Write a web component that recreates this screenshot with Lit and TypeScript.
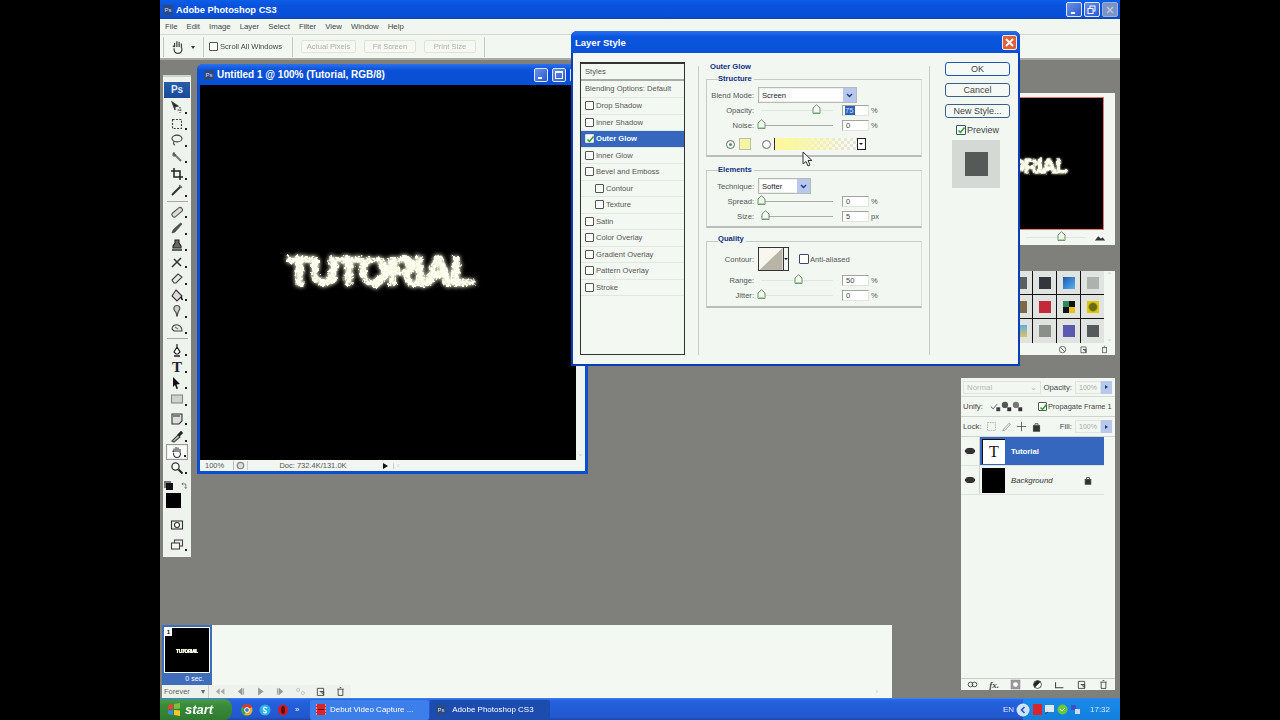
import { LitElement, html, css, svg } from "lit";
import { customElement } from "lit/decorators.js";

const ic = (body: unknown, w = 14, h = 14) => html`<svg class="ic" width=${w} height=${h} viewBox="0 0 14 14" fill="none" stroke="#3c3f3c" stroke-width="1.1">${body}</svg>`;

const tools: { i: unknown; sel?: boolean; gap?: number; sep?: boolean }[] = [
  { i: svg`<path d="M2 2l6 4-3 1 0 3z" fill="#222"/><path d="M10 7v6M7.5 10h5" stroke-dasharray="1.5 1"/>` },
  { i: svg`<rect x="2.5" y="2.5" width="9" height="9" stroke-dasharray="2 1.4"/>` },
  { i: svg`<ellipse cx="7" cy="5.5" rx="5" ry="3.4"/><path d="M4 8.5c-1 2 0 3.5 1 3.5"/>` },
  { i: svg`<path d="M3 3l8 8" stroke-width="2" stroke="#777"/><path d="M2 5h4M4 2v5" stroke-width=".8"/>` },
  { i: svg`<path d="M4 1v9h9M1 4h9v9" stroke-width="1.5" stroke="#222"/>` },
  { i: svg`<path d="M2 12L11 3" stroke-width="2" stroke="#333"/><path d="M9 2l3 3" stroke="#777"/>`, sep: true },
  { i: svg`<rect x="1" y="5" width="12" height="4.6" rx="2" transform="rotate(-40 7 7)" fill="#ddd" stroke="#555"/>` },
  { i: svg`<path d="M2 12l3-1 7-8-1.5-1L3 9z" fill="#555" stroke="#333" stroke-width=".6"/>` },
  { i: svg`<path d="M5 2h4v3l2 3v2H3V8l2-3z" fill="#666" stroke="#222"/><path d="M2 12h10" stroke-width="1.6"/>` },
  { i: svg`<path d="M2 12L11 3M4 4l7 7" stroke="#333" stroke-width="1.5"/>` },
  { i: svg`<path d="M2 9l6-6 4 3-6 6H4z" fill="#e8ece8" stroke="#444"/>` },
  { i: svg`<path d="M6 2l6 6-5 5-5-5z" fill="#ddd" stroke="#333"/><path d="M11 9l1.5 3" stroke="#111" stroke-width="1.6"/>` },
  { i: svg`<path d="M7 1.5c3 0 3.5 3 2 5l-1 2-1 4-1-4-1.500-2c-1.500-2-.5-5 2.500-5z" fill="#ccc" stroke="#444"/>` },
  { i: svg`<path d="M2 8c0-3 3-5 6-4s4 4 4 6H4z" fill="#e8ece8" stroke="#444"/><path d="M5 6l3 2" stroke="#777"/>`, sep: true },
  { i: svg`<path d="M7 1v3M4 9l3-5 3 5-2 2H6z" fill="#fff" stroke="#222" stroke-width="1.2"/><path d="M4 13h6" stroke-width="1.5" stroke="#222"/>` },
  { i: svg`<text x="7" y="12.500" text-anchor="middle" font-family="Liberation Serif, serif" font-size="15" font-weight="700" fill="#222" stroke="none">T</text>` },
  { i: svg`<path d="M3 1l7 7-3.500.5 1.500 4-1.500.5-1.500-4L3 11z" fill="#111" stroke="none"/>` },
  { i: svg`<rect x="1.500" y="3" width="11" height="8" fill="#cfd3cf" stroke="#888"/>`, },
  { i: svg`<path d="M2 2h10v7l-3 3H2z" fill="#ddd" stroke="#333"/><path d="M3 4h7" stroke="#333"/>`, gap: 3 },
  { i: svg`<path d="M2 12l6-6 2 2-6 5z" fill="#ccc" stroke="#444"/><path d="M8 6l3-3 1 1-3 3" fill="#222" stroke="#222" stroke-width="1.6"/>` },
  { i: svg`<path d="M4 7V3.500M6 7V2M8 7V2.500M10 8V4M4 7L2.500 6M3.500 8c0 3 1.500 4.500 3.500 4.500s3.500-1.500 3.500-4.500" stroke="#333"/>`, sel: true },
  { i: svg`<circle cx="5.500" cy="5.500" r="3.600" fill="#fff" stroke="#333" stroke-width="1.300"/><path d="M8.500 8.500l4 4" stroke="#222" stroke-width="2"/>` },
];

const checks: [string, boolean, boolean, boolean][] = [
  ["Drop Shadow", false, false, false], ["Inner Shadow", false, false, false], ["Outer Glow", true, false, true],
  ["Inner Glow", false, false, false], ["Bevel and Emboss", false, false, false], ["Contour", false, true, false],
  ["Texture", false, true, false], ["Satin", false, false, false], ["Color Overlay", false, false, false],
  ["Gradient Overlay", false, false, false], ["Pattern Overlay", false, false, false], ["Stroke", false, false, false],
];

const thumb = (x: number) => html`<svg class="thumb" style="left:${x}px" width="9" height="10" viewBox="0 0 9 10"><path d="M1 9.500V4L4.500 .7 8 4v5.500z" fill="#f4f8f0" stroke="#6d8f6d"/><path d="M1.500 8.700h6" stroke="#8fd08f"/></svg>`;

const sliderRow = (label: string, x: number, val: string, unit: string, track = true, sel = false) => html`
  <div class="row">
    <span class="lbl">${label}</span>
    <span class="track ${track ? "" : "faint"}">${thumb(x)}</span>
    <span class="val ${sel ? "hl" : ""}">${sel ? html`<b>${val}</b>` : val}</span>
    <span class="unit">${unit}</span>
  </div>`;

const tutorial = (w: number, h: number, fs: number, fid: string, sp: number) => svg`
  <svg class="tut" width=${w} height=${h} viewBox="0 0 ${w} ${h}">
    <defs>
      <filter id=${fid} x="-15%" y="-50%" width="130%" height="200%">
        <feTurbulence type="fractalNoise" baseFrequency="0.2" numOctaves="2" seed="7" result="n"/>
        <feDisplacementMap in="SourceGraphic" in2="n" scale=${fs * 0.2} xChannelSelector="R" yChannelSelector="G" result="d"/>
        <feTurbulence type="fractalNoise" baseFrequency="0.42" numOctaves="1" seed="3" result="sp"/>
        <feColorMatrix in="sp" type="matrix" values="0 0 0 0 0 0 0 0 0 0 0 0 0 0 0 0 0 0 -14 8.800" result="holes"/>
        <feComposite in="d" in2="holes" operator="in" result="spk"/>
        <feGaussianBlur in="d" stdDeviation=${fs * 0.05} result="b"/>
        <feColorMatrix in="b" type="matrix" values="0 0 0 0 .95 0 0 0 0 .95 0 0 0 0 .72 0 0 0 1.100 0" result="glow"/>
        <feMerge><feMergeNode in="glow"/><feMergeNode in="spk"/></feMerge>
      </filter>
    </defs>
    <text x=${w / 2} y=${h * 0.72} text-anchor="middle" font-family="Liberation Sans, sans-serif" font-weight="700" font-size=${fs} letter-spacing=${sp} fill="#fdfdf0" stroke="#fdfdf0" stroke-width=${fs * 0.05} filter="url(#${fid})">TUTORIAL</text>
  </svg>`;

const swatchColors = ["#5a5f60", "#33363a", "linear-gradient(135deg,#1a5ab0,#5ab0f0)", "#aeb2ae", "#7a6a48", "#c22a3a", "conic-gradient(#111 25%,#e8c020 0 50%,#111 0 75%,#2a8a60 0)", "radial-gradient(#6a6a10 40%,#e0c800 60%)", "linear-gradient(#5ab0e8,#e0c060)", "#8a8f8a", "#5a58b0", "#555a5a"];

@customElement("app-root")
export class AppRoot extends LitElement {
  static styles = css`
    :host { display: flex; justify-content: center; width: 1280px; height: 720px; background: #000; font-family: "Liberation Sans", Arial, sans-serif; overflow: hidden; }
    * { box-sizing: border-box; }
    .screen { width: 960px; height: 720px; display: flex; flex-direction: column; filter: blur(.6px); color: #333; font-size: 8px; white-space: nowrap; }
    .ic { display: block; flex: none; }

    /* title */
    .xp-title { background: linear-gradient(#0a5ee8, #0a52dc 30%, #0850d8 80%, #0a46b8); color: #fff; display: flex; align-items: center; }
    .main-title { height: 19px; padding: 0 2px 0 3px; gap: 3px; font-size: 9.300px; font-weight: 700; }
    .ps-mini { width: 10px; height: 10px; background: #2a4a80; color: #cfe0ff; font-size: 6px; text-align: center; line-height: 10px; flex: none; font-weight: 400; }
    .grow { flex: 1; }
    .wbtn { width: 16px; height: 15px; border: 1px solid #dfe8ff; border-radius: 2px; background: linear-gradient(135deg, #6a90e8, #2a5ad0); margin-left: -1px; position: relative; display: flex; align-items: center; justify-content: center; }
    .wbtn.off { background: #7a94c8; border-color: #9ab0d8; color: #aab6d0; }
    .wbtn svg { display: block; }
    .wbtn.small { width: 14px; height: 14px; margin-left: 1px; }

    .menu { height: 15px; background: #f2f6f1; display: flex; align-items: center; padding-left: 5px; gap: 9px; font-size: 7.800px; color: #444; }
    .opts { height: 26px; background: #f3f7f2; border-top: 1px solid #d4d8d2; border-bottom: 2px solid #a8aca6; display: flex; align-items: center; padding-left: 3px; font-size: 7.600px; color: #444; }
    .grip { width: 1px; height: 20px; background: #bfc4be; margin-right: 6px; }
    .v { width: 1px; height: 20px; background: #c5c9c4; }
    .caret { width: 0; height: 0; border: 2.500px solid transparent; border-top: 3px solid #333; margin: 3px 8px 0 5px; }
    .cb { width: 9px; height: 9px; border: 1px solid #555; background: #fbfdfa; border-radius: 1px; flex: none; display: inline-block; position: relative; }
    .sp5 { width: 5px; flex: none; }
    .scrollall { margin: 0 8px 0 2px; width: 64px; }
    .ob { height: 13px; border: 1px solid #e2e4d0; border-radius: 2px; color: #adb1a8; display: flex; align-items: center; justify-content: center; background: #f5f8f3; margin-left: 8px; }
    .ob.a { width: 55px; } .ob.b, .ob.c { width: 52px; }
    .v2 { margin-left: 8px; }

    .work { flex: 1; background: #7f807c; position: relative; z-index: 1; }
    .win { position: absolute; }

    /* toolbox */
    .toolbox { left: 3px; top: 15px; width: 28px; height: 482px; background: #eef3ee; display: flex; flex-direction: column; align-items: center; padding-top: 5px; border-top: 2px solid #cfd3ce; }
    .ps { width: 26px; height: 16px; background: linear-gradient(#2a5ca8, #174a98); color: #dfeaff; font: 700 10px/15px "Liberation Sans", sans-serif; text-align: center; margin-bottom: 1px; }
    .tool { width: 22px; height: 16.600px; display: flex; align-items: center; justify-content: center; position: relative; flex: none; }
    .tool::after { content: ""; position: absolute; right: 1px; bottom: 2px; width: 2px; height: 2px; background: #222; }
    .tool.sel { border: 1px solid #999; background: #fff; }
    .tool.nomark::after { display: none; }
    .sep { width: 21px; height: 1px; background: #aaa; margin: 2px 0 2px; flex: none; }
    .mini-cols { display: flex; align-items: center; gap: 7px; height: 12px; margin-top: 4px; }
    .mini-fg { width: 7px; height: 7px; background: #111; box-shadow: -2px -2px 0 0 #777; }
    .fg { width: 15px; height: 15px; background: #000; margin-top: 1px; flex: none; align-self: flex-start; margin-left: 3px; }
    .lowtool { margin-top: 8px; }
    .lowtool.second { margin-top: 3px; }

    /* document window */
    .doc { left: 37px; top: 4px; width: 391px; height: 410px; background: #0a4ed2; border-radius: 6px 6px 0 0; display: flex; flex-direction: column; padding: 0 3px 3px; }
    .doc-title { height: 21px; margin: 0 -3px; padding: 0 4px 0 7px; gap: 3px; background: linear-gradient(#2a72ee, #0a50d8 30%, #0850d4); border-radius: 6px 6px 0 0; font-size: 10px; font-weight: 700; }
    .doc-body { flex: 1; display: flex; min-height: 0; }
    .canvas { width: 376px; background: #000; display: flex; align-items: center; justify-content: center; }
    .tut { display: block; flex: none; }
    .canvas .tut { margin: 0 16px 6px 0; }
    .vscroll { flex: 1; background: #f0f4ef; display: flex; align-items: flex-end; justify-content: center; color: #c8ccc8; font-size: 8px; padding-bottom: 2px; }
    .doc-status { height: 11px; background: #f2f6f1; display: flex; align-items: center; font-size: 7.500px; color: #555; }
    .doc-status .a { width: 34px; padding-left: 5px; border-right: 1px solid #bbb; }
    .doc-status .b { width: 14px; border-right: 1px solid #ccc; display: flex; justify-content: center; }
    .doc-status .c { width: 130px; text-align: center; }
    .tri { width: 0; height: 0; border: 3px solid transparent; border-left: 5px solid #111; border-right: 0; }
    .doc-status .d { width: 16px; display: flex; justify-content: center; border-right: 1px solid #ccc; }
    .doc-status .e { color: #c8ccc8; margin-left: 3px; }

    /* layer style dialog */
    .dlg { left: 411px; top: -29px; width: 449px; height: 335px; background: #0a3eb8; border-radius: 6px 6px 0 0; padding: 0 2px 2px; display: flex; flex-direction: column; z-index: 3; }
    .dlg-title { height: 22px; margin: 0 -2px; padding: 0 3px 0 4px; border-radius: 6px 6px 0 0; font-size: 9.500px; font-weight: 700; background: linear-gradient(#2a72ee, #0a56de 25%, #0850d8); }
    .close { width: 15px; height: 15px; border: 1px solid #f4e8e0; border-radius: 2px; background: #e0603a; display: flex; align-items: center; justify-content: center; }
    .dlg-body { flex: 1; background: #f2f7f2; display: flex; padding: 9px 0 9px 7px; min-height: 0; font-size: 7.600px; }
    .list { width: 105px; border: 1px solid #333; border-top-width: 2px; background: #f4f8f3; color: #555; flex: none; }
    .list > div { display: flex; align-items: center; height: 16.500px; border-bottom: 1px solid #e3e7e2; padding-left: 4px; gap: 2px; }
    .list .head { height: 16.500px; border-bottom: 2px solid #aaa; }
    .list .blend { height: 17.500px; }
    .list .ind { padding-left: 14px; }
    .list .on { background: #3567bf; color: #fff; font-weight: 700; }
    .on .cb { border-color: #ddd; }
    .cb svg { position: absolute; left: 0; top: 0; }
    .gap13 { width: 13px; flex: none; }
    .vline { width: 1px; background: #c7ccc7; margin-top: 4px; flex: none; }
    .mid { width: 216px; margin: 0 7px; flex: none; }
    .h { font-weight: 700; color: #12307f; height: 11px; line-height: 11px; }
    .h.top { padding-left: 4px; height: 17px; line-height: 10px; }
    .grp { border: 1px solid #c6cbc6; border-right-color: #dadfda; border-bottom: 2px solid #b9beb9; margin-bottom: 13px; padding: 0 0 2px; }
    .grp.g1 { padding-bottom: 0; }
    .grp.g3 { padding-bottom: 3px; }
    .grp .h { margin: -7px 0 0 11px; background: #f2f7f2; width: max-content; padding-right: 2px; }
    .grp.g3 .h { margin: -9px 0 3px 11px; }
    .row { height: 15px; display: flex; align-items: center; color: #555; }
    .row.sr { height: 16px; margin-top: 3px; }
    .lbl { width: 47px; text-align: right; margin-right: 4px; flex: none; color: #555; }
    .sel { height: 16px; background: #fff; border: 1px solid #b5bab5; display: flex; align-items: center; padding-left: 3px; justify-content: space-between; color: #222; box-shadow: inset 0 0 0 1px #eee; }
    .sel i { width: 13px; height: 14px; background: #b8c8ec; display: flex; align-items: center; justify-content: center; }
    .s1 { width: 99px; }
    .s2 { width: 53px; }
    .track { position: relative; width: 72px; height: 1px; background: #a9ada9; margin: 0 9px 0 3px; flex: none; }
    .track.faint { background: #e2e6e2; }
    .thumb { position: absolute; top: -6px; margin-left: -4px; }
    .val { width: 27px; height: 11px; background: #fff; border: 1px solid #e0e4e0; border-left-color: #a0a5a0; border-top-color: #a0a5a0; padding-left: 3px; line-height: 9px; font-size: 7.500px; color: #444; flex: none; }
    .val b { background: #2f60b8; color: #cfe0ff; font-weight: 400; display: inline-block; width: 10px; height: 9px; margin-left: -1px; }
    .unit { margin-left: 2px; font-size: 7.500px; color: #555; }
    .colrow { height: 16px; margin: 3px 0 3px; display: flex; align-items: center; padding-left: 19px; }
    .radio { width: 9px; height: 9px; border-radius: 50%; border: 1px solid #667; background: #fbfdfa; flex: none; display: flex; align-items: center; justify-content: center; }
    .radio u { width: 3px; height: 3px; border-radius: 50%; background: #3a9a3a; }
    .sw { width: 12px; height: 12px; background: #f6f4a6; border: 1px solid #bdbda0; margin: 0 10.500px 0 4px; flex: none; }
    .grad { width: 83px; height: 12px; margin-left: 3px; border-left: 1px solid #333; background: linear-gradient(90deg, #fbf8a0 12%, #f8f6a8 30%, rgba(248,246,180,0) 95%), repeating-conic-gradient(#e4e6de 0 25%, #fbfbf6 0 50%) 0 0 / 6px 6px; flex: none; }
    .gdrop { width: 9px; height: 12px; border: 1px solid #222; background: #fff; display: flex; align-items: center; justify-content: center; }
    .gdrop::after, .cdrop::after { content: ""; border: 2px solid transparent; border-top: 2.500px solid #111; margin-top: 2px; }
    .row.contour-row { height: 24px; margin: 1px 0 2px; }
    .contour { width: 25px; height: 24px; border: 1px solid #333; border-right: 0; flex: none; background: #f7f7f0; display: block; }
    .cdrop { width: 6px; height: 24px; border: 1px solid #333; display: flex; align-items: center; justify-content: center; flex: none; }
    .row .cb { margin: 0 1px 0 10px; width: 10px; height: 10px; border-color: #446; }
    .right { width: 65px; margin-left: 15px; display: flex; flex-direction: column; align-items: stretch; font-size: 9px; color: #444; flex: none; }
    .btn { height: 14px; border: 1px solid #3a5f88; border-right-width: 1.500px; border-bottom-width: 1.500px; border-radius: 3px; background: #f6faf6; display: flex; align-items: center; justify-content: center; margin-bottom: 7px; }
    .btn.def { border: 1.500px solid #1f56b0; }
    .pv { display: flex; align-items: center; justify-content: center; gap: 1px; margin: 0 0 3px; height: 10px; }
    .pv .cb { border-color: #356; width: 10px; height: 10px; }
    .pbox { width: 48px; height: 48px; background: #d5d9d5; display: flex; align-items: center; justify-content: center; margin-left: 7px; margin-top: 2px; }
    .pbox div { width: 23px; height: 24px; background: #555958; }
    .cursor { position: absolute; left: 231px; top: 120px; }

    /* navigator */
    .nav { left: 860px; top: 33px; width: 95px; height: 152px; background: #f3f7f2; padding-top: 4px; }
    .nav-img { width: 84px; height: 133px; background: #000; border: 1px solid #e87070; border-left: 0; overflow: hidden; display: flex; align-items: center; }
    .nav-img .tut { margin-left: -60px; }
    .nav-foot { display: flex; align-items: center; height: 15px; position: relative; }
    .nav-foot .track { width: 60px; margin: 0 8px 0 6px; }

    /* swatches */
    .swp { left: 860px; top: 211px; width: 95px; height: 84px; background: #f3f7f2; display: flex; flex-wrap: wrap; }
    .swg { display: grid; grid-template-columns: 13px 24px 24px 23px; grid-auto-rows: 24px; width: 84px; }
    .swc { display: flex; align-items: center; justify-content: center; background: #e0e3df; border-right: 1px solid #111; border-bottom: 1px solid #111; }
    .swc:nth-child(4n) { border-right: 0; }
    .swc:nth-child(n+9) { border-bottom: 0; }
    .swc div { width: 12px; height: 12px; }
    .swc:nth-child(4n+1) div { margin-left: -8px; width: 10px; }
    .swsb { width: 11px; height: 72px; display: flex; flex-direction: column; justify-content: space-between; color: #ccc; font-size: 8px; text-align: center; }
    .swfoot { width: 95px; height: 12px; display: flex; justify-content: flex-end; gap: 12px; align-items: center; padding-right: 6px; }

    /* layers */
    .layers { left: 801px; top: 318px; width: 154px; height: 312px; background: #f3f7f2; display: flex; flex-direction: column; font-size: 7.800px; color: #444; }
    .lr { height: 20px; display: flex; align-items: center; padding: 0 3px 0 2px; border-bottom: 1px solid #d0d4cf; flex: none; }
    .lr.r1 { height: 19px; border-bottom: 1px solid #d5d9d4; }
    .nrm { width: 78px; height: 13px; border: 1px solid #dfe3de; color: #b5b9b5; display: flex; justify-content: space-between; align-items: center; padding: 0 3px; }
    .op { flex: 1; text-align: right; padding-right: 3px; }
    .op2 { width: 26px; height: 13px; border: 1px solid #e0e4df; color: #aaa; line-height: 11px; text-align: center; font-size: 7px; }
    .arr { width: 11px; height: 13px; background: #b8c8ec; display: flex; align-items: center; justify-content: center; }
    .arr::after { content: ""; border: 2.500px solid transparent; border-left: 3px solid #1d3a88; border-right: 0; }
    .s4 { width: 4px; flex: none; } .s7 { width: 7px; flex: none; } .s15 { width: 15px; flex: none; } .s11 { width: 11px; flex: none; }
    .prop { margin-left: 1px; font-size: 7.400px; }
    .lay-row { height: 29px; display: flex; align-items: center; width: 143px; border-bottom: 1px solid #dfe3de; flex: none; }
    .eye { width: 19px; height: 100%; border-right: 1px solid #ccd0cb; background: #f3f7f2; display: flex; align-items: center; justify-content: center; flex: none; }
    .lthumb { width: 23px; height: 25px; margin: 0 6px 0 2px; display: flex; align-items: center; justify-content: center; flex: none; }
    .lay-row.on { background: #3567bf; color: #fff; font-weight: 700; }
    .lay-row.on .lthumb { background: #fff; font: 400 16px/25px "Liberation Serif", serif; color: #111; border-left: 1px solid #111; border-top: 1px solid #111; }
    .lay-row.bg .lthumb { background: #000; }
    .lay-row.bg i { flex: 1; color: #333; }
    .lays { flex: 1; display: flex; min-height: 0; position: relative; }
    .lays-l { width: 143px; }
    .lfoot { height: 12px; border-top: 1px solid #c8ccc7; display: flex; align-items: center; gap: 11px; padding: 0 6px 0 10px; flex: none; justify-content: flex-end; }
    .fx { font: italic 700 9px "Liberation Serif", serif; }

    /* animation */
    .anim { left: 2px; top: 565px; width: 730px; height: 73px; background: #f4f8f3; display: grid; grid-template-columns: 50px 1fr; grid-template-rows: 60px 13px; }
    .frame { background: #3d6dbb; padding: 2px 2px 0; position: relative; color: #fff; font-size: 7px; }
    .fimg { width: 46px; height: 46px; background: #000; border: 1px solid #fff; position: relative; display: flex; align-items: center; justify-content: center; overflow: hidden; }
    .fimg em { position: absolute; left: 0; top: 0; width: 7px; height: 8px; background: #fff; color: #000; font: 700 6px/8px "Liberation Sans", sans-serif; text-align: center; }
    .ftime { text-align: right; padding-right: 6px; line-height: 10px; margin-top: 1px; }
    .actl { grid-column: 1 / 3; display: flex; align-items: center; font-size: 7.500px; color: #666; }
    .forever { width: 47px; padding-left: 2px; display: flex; justify-content: space-between; border-right: 1px solid #ccc; height: 100%; align-items: center; padding-right: 3px; background: #eef2ed; }
    .pbtns { display: flex; gap: 9px; align-items: center; padding-left: 6px; background: #eef2ed; height: 100%; width: 142px; }
    .ascroll { margin-left: auto; margin-right: 14px; color: #c8ccc8; }

    /* taskbar */
    .task { height: 22px; background: linear-gradient(#2a6ae8, #2460dc 15%, #2258d0 85%, #1c48b0); display: flex; align-items: center; color: #fff; font-size: 8px; border-top: 1px solid #3c80f0; }
    .start { width: 72px; height: 21px; background: linear-gradient(#4a9a4a, #3a8c3a 30%, #2f7a30); border-radius: 0 8px 8px 0; display: flex; align-items: center; padding-left: 7px; gap: 4px; font: italic 700 13px "Liberation Sans", sans-serif; flex: none; }
    .ql { display: flex; gap: 6px; align-items: center; padding-left: 9px; width: 78px; flex: none; }
    .tb { height: 20px; display: flex; align-items: center; padding-left: 6px; gap: 4px; border-radius: 2px; flex: none; }
    .tb.l { width: 119px; background: #3c7eea; }
    .tb.d { width: 120px; background: #1c4cae; margin-left: 1px; }
    .tray { height: 21px; background: linear-gradient(#1a8aea, #1280dc); width: 97px; display: flex; align-items: center; flex: none; }
    .tray svg { margin-right: 2px; flex: none; }
    .tray .circ { margin: 0 3px 0 -7px; }
    .clock { margin-left: 7px; color: #d8e8ff; }
    .en { margin-left: auto; margin-right: 9px; color: #dfe8ff; }
  `;

  private cb(on = false) {
    return html`<span class="cb">${on ? html`<svg width="9" height="9" viewBox="0 0 9 9" fill="none" stroke="#2f9a2f" stroke-width="1.500"><path d="M1.500 4.500l2 2 4-5"/></svg>` : ""}</span>`;
  }

  private wb(kind: string, cls = "") {
    const g = kind === "min" ? svg`<rect x="2" y="7" width="4" height="2" fill="#fff"/>`
      : kind === "max" ? svg`<rect x="1.500" y="1.500" width="7" height="7" fill="none" stroke="#fff"/><path d="M1.500 2.500h7" stroke="#fff"/>`
      : kind === "rest" ? svg`<rect x="3" y="1" width="5" height="5" fill="none" stroke="#fff"/><rect x="1" y="3.500" width="5" height="5" fill="#3a6ad8" stroke="#fff"/>`
      : svg`<path d="M2 2l6 6M8 2l-6 6" stroke="#bcc6da" stroke-width="1.500"/>`;
    return html`<span class="wbtn ${cls}"><svg width="10" height="10" viewBox="0 0 10 10">${g}</svg></span>`;
  }

  private group(title: string, body: unknown, cls = "") {
    return html`<div class="grp ${cls}"><div class="h">${title}</div>${body}</div>`;
  }

  private drop() {
    return html`<i><svg width="7" height="5" viewBox="0 0 7 5" fill="none" stroke="#1d3a88" stroke-width="1.400"><path d="M1 1l2.500 2.500L6 1"/></svg></i>`;
  }

  render() {
    return html`<div class="screen">
      <div class="xp-title main-title">
        <span class="ps-mini">Ps</span><span>Adobe Photoshop CS3</span><span class="grow"></span>
        ${this.wb("min")}${this.wb("rest")}${this.wb("x", "off")}
      </div>
      <div class="menu">${["File", "Edit", "Image", "Layer", "Select", "Filter", "View", "Window", "Help"].map((m) => html`<span>${m}</span>`)}</div>
      <div class="opts">
        <span class="grip"></span>
        ${ic(svg`<path d="M4 7V3.500M6 7V2M8 7V2.500M10 8V4M4 7L2.500 6M3.500 8c0 3 1.500 4.500 3.500 4.500s3.500-1.500 3.500-4.500" stroke="#444"/>`, 16, 16)}
        <span class="caret"></span><span class="v"></span>
        <span class="sp5"></span>${this.cb()}
        <span class="scrollall">Scroll All Windows</span><span class="v"></span>
        <span class="ob a">Actual Pixels</span>
        <span class="ob b">Fit Screen</span>
        <span class="ob c">Print Size</span>
        <span class="v v2"></span>
      </div>

      <div class="work">
        <div class="win toolbox">
          <div class="ps">Ps</div>
          ${tools.map((t) => html`<div class="tool ${t.sel ? "sel" : ""}" style=${t.gap ? `margin-top:${t.gap}px` : ""}>${ic(t.i)}</div>${t.sep ? html`<div class="sep"></div>` : ""}`)}
          <div class="mini-cols"><span class="mini-fg"></span>${ic(svg`<path d="M3 3h6l0 7M7 8l2 2 2-2M3 3l2-2M3 3l2 2" stroke-width=".9"/>`, 9, 9)}</div>
          <div class="fg"></div>
          <div class="tool nomark lowtool">${ic(svg`<rect x="1.500" y="3" width="11" height="8" fill="#eee" stroke="#333"/><circle cx="7" cy="7" r="2.500" fill="#fff" stroke="#333"/>`)}</div>
          <div class="tool lowtool second">${ic(svg`<rect x="4.500" y="3" width="8" height="6" fill="#eee" stroke="#444"/><rect x="1.500" y="6" width="8" height="6" fill="#f6f6f6" stroke="#444"/>`)}</div>
        </div>

        <div class="win doc">
          <div class="xp-title doc-title">
            <span class="ps-mini">Ps</span><span>Untitled 1 @ 100% (Tutorial, RGB/8)</span><span class="grow"></span>
            ${this.wb("min", "small")}${this.wb("max", "small")}${this.wb("x", "small")}
          </div>
          <div class="doc-body">
            <div class="canvas">${tutorial(220, 70, 40, "tg", -2)}</div>
            <div class="vscroll">⌄</div>
          </div>
          <div class="doc-status">
            <span class="a">100%</span>
            <span class="b">${ic(svg`<circle cx="7" cy="7" r="5" fill="#ddd" stroke="#888" stroke-width="2"/>`, 9, 9)}</span>
            <span class="c">Doc: 732.4K/131.0K</span>
            <span class="d"><span class="tri"></span></span>
            <span class="e">‹</span>
          </div>
        </div>

        <div class="win nav">
          <div class="nav-img">${tutorial(120, 40, 20, "tn", -1)}</div>
          <div class="nav-foot"><span class="track faint">${thumb(35)}</span>${ic(svg`<path d="M1 10l4-5 3 3 2-2 3 4z" fill="#333" stroke="none"/>`, 12, 12)}</div>
        </div>

        <div class="win swp">
          <div class="swg">${swatchColors.map((c) => html`<div class="swc"><div style="background:${c}"></div></div>`)}</div>
          <div class="swsb"><span>⌃</span><span>⌄</span></div>
          <div class="swfoot">
            ${ic(svg`<circle cx="7" cy="7" r="5"/><path d="M3.500 3.500l7 7"/>`, 9, 9)}
            ${ic(svg`<path d="M3 3h8v9H3z"/><path d="M6 7h5v5" fill="#888"/>`, 9, 9)}
            ${ic(svg`<path d="M3 4h8M4 4v8h6V4M6 2h2"/>`, 9, 9)}
          </div>
        </div>

        <div class="win layers">
          <div class="lr r1"><span class="nrm">Normal<span>⌄</span></span><span class="op">Opacity:</span><span class="op2">100%</span><span class="arr"></span></div>
          <div class="lr"><span>Unify:</span><span class="s7"></span>
            ${ic(svg`<path d="M1 7l3 3 5-6" stroke-width="1"/><rect x="8" y="8" width="5" height="5" fill="#444" stroke="none"/>`, 11, 11)}
            ${ic(svg`<circle cx="5" cy="5" r="4" fill="#555" stroke="none"/><rect x="8" y="8" width="5" height="5" fill="#333" stroke="none"/>`, 11, 11)}
            ${ic(svg`<circle cx="5" cy="5" r="4" fill="#777" stroke="none"/><rect x="8" y="8" width="5" height="5" fill="#333" stroke="none"/>`, 11, 11)}
            <span class="s15"></span>${this.cb(true)}<span class="prop">Propagate Frame 1</span>
          </div>
          <div class="lr"><span>Lock:</span><span class="s4"></span>
            ${ic(svg`<rect x="2" y="2" width="10" height="10" stroke="#aaa" stroke-dasharray="2 1"/>`, 11, 11)}<span class="s4"></span>
            ${ic(svg`<path d="M2 12l8-9 2 1-7 8z" stroke="#999"/>`, 11, 11)}<span class="s4"></span>
            ${ic(svg`<path d="M7 1v12M1 7h12" stroke="#555"/>`, 11, 11)}<span class="s4"></span>
            ${ic(svg`<rect x="3" y="6" width="8" height="7" fill="#333"/><path d="M5 6V3.500h4V6" />`, 11, 11)}
            <span class="op">Fill:</span><span class="op2">100%</span><span class="arr"></span>
          </div>
          <div class="lays">
            <div class="lays-l">
              <div class="lay-row on"><span class="eye">${ic(svg`<ellipse cx="7" cy="7" rx="5.500" ry="3" fill="#333" stroke="#222"/>`, 12, 12)}</span><span class="lthumb">T</span><span>Tutorial</span></div>
              <div class="lay-row bg"><span class="eye">${ic(svg`<ellipse cx="7" cy="7" rx="5.500" ry="3" fill="#333" stroke="#222"/>`, 12, 12)}</span><span class="lthumb"></span><i>Background</i>${ic(svg`<rect x="3" y="6" width="8" height="7" fill="#333"/><path d="M5 6V3.500h4V6"/>`, 10, 10)}<span class="s11"></span></div>
            </div>
          </div>
          <div class="lfoot">
            ${ic(svg`<circle cx="4.500" cy="7" r="3"/><circle cx="9.500" cy="7" r="3"/>`, 11, 11)}
            <span class="fx">fx.</span>
            ${ic(svg`<rect x="1.500" y="1.500" width="11" height="11" fill="#999" stroke="#888"/><circle cx="7" cy="7" r="3" fill="#fff" stroke="none"/>`, 11, 11)}
            ${ic(svg`<circle cx="7" cy="7" r="5" fill="#fff"/><path d="M3.500 10.500a5 5 0 0 1 7-7z" fill="#222"/>`, 11, 11)}
            ${ic(svg`<path d="M2 4v7h10" stroke-width="1.300"/>`, 11, 11)}
            ${ic(svg`<path d="M3 3h8v9H3z"/><path d="M6 7h5v5" fill="#888"/>`, 11, 11)}
            ${ic(svg`<path d="M3 4h8M4 4v8h6V4M6 2h2"/>`, 11, 11)}
          </div>
        </div>

        <div class="win anim">
          <div class="frame">
            <div class="fimg"><em>1</em>${tutorial(30, 12, 4.500, "tf", -0.1)}</div>
            <div class="ftime">0 sec.</div>
          </div>
          <div></div>
          <div class="actl">
            <span class="forever"><span>Forever</span><span>▾</span></span>
            <span class="pbtns">
              ${ic(svg`<path d="M6 3v8L1 7zM12 3v8L7 7z" fill="#aaa" stroke="none"/>`, 11, 11)}
              ${ic(svg`<path d="M9 3v8L4 7z M11 3v8" fill="#999" stroke="#999"/>`, 11, 11)}
              ${ic(svg`<path d="M4 2v10l7-5z" fill="#999" stroke="none"/>`, 11, 11)}
              ${ic(svg`<path d="M5 3v8l5-4z M3 3v8" fill="#999" stroke="#999"/>`, 11, 11)}
              ${ic(svg`<circle cx="4" cy="5" r="2" stroke="#bbb"/><circle cx="10" cy="9" r="2" stroke="#bbb"/>`, 11, 11)}
              ${ic(svg`<path d="M3 3h8v9H3z"/><path d="M6 7h5v5" fill="#888"/>`, 11, 11)}
              ${ic(svg`<path d="M3 4h8M4 4v8h6V4M6 2h2"/>`, 11, 11)}
            </span>
            <span class="ascroll">›</span>
          </div>
        </div>

        <div class="win dlg">
          <div class="xp-title dlg-title"><span>Layer Style</span><span class="grow"></span>
            <span class="close"><svg width="9" height="9" viewBox="0 0 9 9"><path d="M1 1l7 7M8 1l-7 7" stroke="#fff" stroke-width="1.800"/></svg></span>
          </div>
          <div class="dlg-body">
            <div class="list">
              <div class="head">Styles</div>
              <div class="blend">Blending Options: Default</div>
              ${checks.map(([n, on, ind, active]) => html`<div class="${ind ? "ind" : ""} ${active ? "on" : ""}">${this.cb(on)}<span>${n}</span></div>`)}
            </div>
            <div class="gap13"></div>
            <div class="vline"></div>
            <div class="mid">
              <div class="h top">Outer Glow</div>
              ${this.group("Structure", html`
                <div class="row sr"><span class="lbl">Blend Mode:</span><span class="sel s1">Screen${this.drop()}</span></div>
                ${sliderRow("Opacity:", 55, "75", "%", false, true)}
                ${sliderRow("Noise:", 0, "0", "%")}
                <div class="colrow">
                  <span class="radio"><u></u></span><span class="sw"></span><span class="radio"></span>
                  <span class="grad"></span><span class="gdrop"></span>
                </div>`, "g1")}
              ${this.group("Elements", html`
                <div class="row sr"><span class="lbl">Technique:</span><span class="sel s2">Softer${this.drop()}</span></div>
                ${sliderRow("Spread:", 0, "0", "%")}
                ${sliderRow("Size:", 4, "5", "px")}`, "g2")}
              ${this.group("Quality", html`
                <div class="row contour-row"><span class="lbl">Contour:</span>
                  <svg class="contour" viewBox="0 0 25 24"><path d="M0 24L25 0v24z" fill="#b9b4a6"/></svg><span class="cdrop"></span>
                  ${this.cb()}<span>Anti-aliased</span></div>
                ${sliderRow("Range:", 37, "50", "%", false)}
                ${sliderRow("Jitter:", 0, "0", "%", false)}`, "g3")}
            </div>
            <div class="vline"></div>
            <div class="right">
              <div class="btn def">OK</div>
              <div class="btn">Cancel</div>
              <div class="btn">New Style...</div>
              <div class="pv">${this.cb(true)}<span>Preview</span></div>
              <div class="pbox"><div></div></div>
            </div>
          </div>
          <svg class="cursor" width="12" height="16" viewBox="0 0 12 16"><path d="M1 1v12l3-2.500 2 4.500 2-1-2-4.500h4z" fill="#f4f8f4" stroke="#333"/></svg>
        </div>
      </div>

      <div class="task">
        <div class="start">
          <svg width="14" height="14" viewBox="0 0 14 14"><path d="M1 2l5-1v5l-5 .5z" fill="#e8452c"/><path d="M7 1l6-1v5.500L7 6z" fill="#7bc043"/><path d="M1 7.500l5-.5v5l-5-1z" fill="#3a8ae8"/><path d="M7 7l6 .5V13l-6-1z" fill="#f7c82c"/></svg>
          <span>start</span>
        </div>
        <div class="ql">
          <svg width="12" height="12" viewBox="0 0 12 12"><circle cx="6" cy="6" r="5.500" fill="#e8b020"/><path d="M6 6L1 3a5.500 5.500 0 0 1 10 0z" fill="#d83a2a"/><path d="M6 6L3 11a5.500 5.500 0 0 1-2-8z" fill="#3aa04a"/><circle cx="6" cy="6" r="2.400" fill="#3a7ad8" stroke="#fff"/></svg>
          <svg width="12" height="12" viewBox="0 0 12 12"><circle cx="6" cy="6" r="5.500" fill="#2ab0ee"/><path d="M8 4C7 3 4 3 4.500 5S8 6.500 7.500 8 5 9 4 8" stroke="#fff" stroke-width="1.300" fill="none"/></svg>
          <svg width="12" height="12" viewBox="0 0 12 12"><ellipse cx="6" cy="6" rx="5" ry="5.500" fill="#d81a1a"/><ellipse cx="6" cy="6" rx="2" ry="4" fill="#5a1010"/></svg>
          <span>»</span>
        </div>
        <div class="tb l">
          <svg width="10" height="11" viewBox="0 0 10 11"><rect width="10" height="11" fill="#d8242a"/><path d="M0 1h1M0 4h1M0 7h1M0 10h1M9 1h1M9 4h1M9 7h1M9 10h1" stroke="#fff"/><path d="M2 5.500h6" stroke="#400"/></svg>
          <span>Debut Video Capture ...</span>
        </div>
        <div class="tb d"><span class="ps-mini">Ps</span><span>&nbsp;Adobe Photoshop CS3</span></div>
        <span class="en">EN</span>
        <div class="tray">
          <svg class="circ" width="14" height="14" viewBox="0 0 14 14"><circle cx="7" cy="7" r="6.500" fill="#cfe4ff"/><path d="M8.500 4L5.500 7l3 3" stroke="#1a50b0" stroke-width="1.500" fill="none"/></svg>
          <svg width="9" height="11" viewBox="0 0 9 11"><rect width="9" height="11" fill="#d8242a"/></svg>
          <svg width="11" height="11" viewBox="0 0 11 11"><rect x="1" y="1" width="9" height="7" fill="#dfe8f0"/><path d="M1 10l3-2" stroke="#444"/></svg>
          <svg width="11" height="11" viewBox="0 0 11 11"><circle cx="5.500" cy="5.500" r="5" fill="#6ac83a"/><path d="M3 5l2 2 3-3" stroke="#fff" fill="none"/></svg>
          <svg width="11" height="11" viewBox="0 0 11 11"><rect x="1" y="1" width="5" height="5" fill="#3a50c8"/><rect x="5" y="5" width="5" height="5" fill="#cfd8f0"/></svg>
          <span class="clock">17:32</span>
        </div>
      </div>
    </div>`;
  }
}
